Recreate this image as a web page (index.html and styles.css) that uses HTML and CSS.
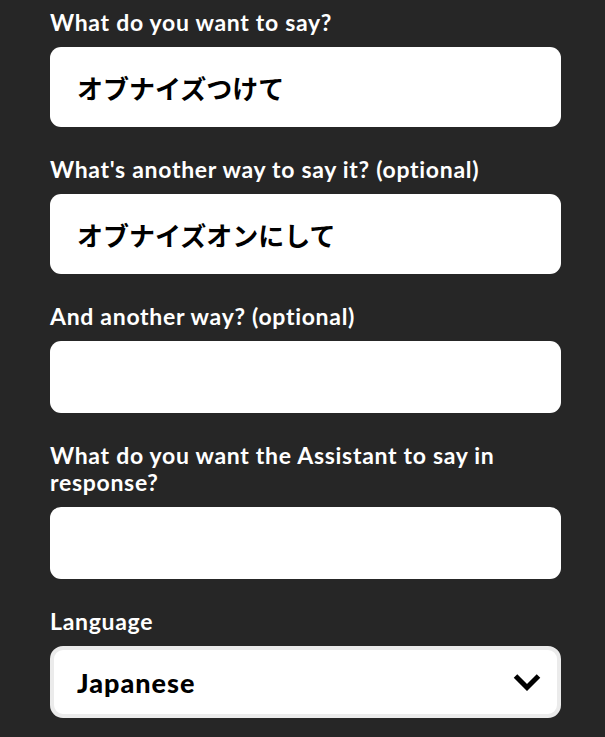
FILE: index.html
```html
<!DOCTYPE html>
<html lang="en">
<head>
<meta charset="utf-8">
<title>Phrase form</title>
<link rel="stylesheet" href="styles.css">
</head>
<body>
<form class="form">
  <div class="field">
    <label class="label" for="f1">What do you want to say?</label>
    <input class="input input-tall" id="f1" type="text" value="オブナイズつけて">
  </div>
  <div class="field">
    <label class="label" for="f2">What's another way to say it? (optional)</label>
    <input class="input input-tall" id="f2" type="text" value="オブナイズオンにして">
  </div>
  <div class="field">
    <label class="label" for="f3">And another way? (optional)</label>
    <input class="input" id="f3" type="text" value="">
  </div>
  <div class="field">
    <label class="label" for="f4">What do you want the Assistant to say in response?</label>
    <input class="input" id="f4" type="text" value="">
  </div>
  <div class="field">
    <span class="label">Language</span>
    <div class="select">
      <span class="select-value">Japanese</span>
      <svg class="chevron" width="28" height="18" viewBox="0 0 28 18" aria-hidden="true">
        <path d="M2.5 3 L14 14.5 L25.5 3" fill="none" stroke="#000" stroke-width="5" stroke-linejoin="miter"/>
      </svg>
    </div>
  </div>
</form>
</body>
</html>
```
FILE: styles.css
```css
html, body {
  margin: 0;
  padding: 0;
  background: #262626;
}

body {
  font-family: "Lato", "Noto Sans", sans-serif;
}

.form {
  width: 511px;
  padding: 9px 0 0 50px;
  display: flex;
  flex-direction: column;
  gap: 29px;
}

.field {
  display: flex;
  flex-direction: column;
  gap: 11px;
}

.label {
  color: #ffffff;
  font-weight: 700;
  font-size: 23px;
  letter-spacing: 0.7px;
  line-height: 27px;
}

.input {
  box-sizing: border-box;
  width: 511px;
  height: 72px;
  margin: 0;
  border: none;
  border-radius: 11px;
  background: #ffffff;
  padding: 0 0 0 27px;
  font-family: "Noto Sans CJK JP", "Noto Sans", sans-serif;
  font-weight: 700;
  font-size: 26px;
  color: #000000;
  outline: none;
}

.input-tall {
  height: 80px;
}

.select {
  box-sizing: border-box;
  width: 511px;
  height: 72px;
  border: 4px solid #ebebeb;
  border-radius: 13px;
  background: #ffffff;
  display: flex;
  align-items: center;
  justify-content: space-between;
  padding: 0 16px 0 23px;
}

.select-value {
  font-family: "Lato", "Noto Sans", sans-serif;
  font-weight: 900;
  font-size: 27px;
  letter-spacing: 1px;
  color: #000000;
}

.chevron {
  display: block;
}
```
